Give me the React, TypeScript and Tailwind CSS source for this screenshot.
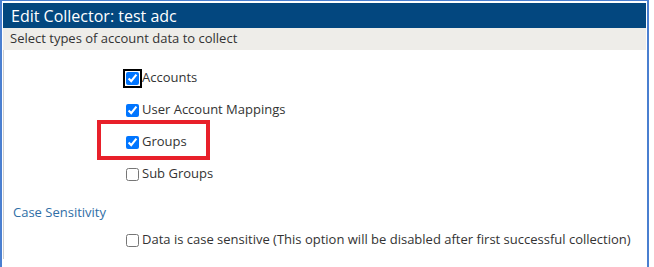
import { useState } from "react";

const rows = [
  { label: "Accounts", checked: true, focused: true },
  { label: "User Account Mappings", checked: true },
  { label: "Groups", checked: true, marked: true },
  { label: "Sub Groups", checked: false },
];

function Check({ checked, focused }: { checked: boolean; focused?: boolean }) {
  const [on, setOn] = useState(checked);
  return (
    <input
      type="checkbox"
      checked={on}
      onChange={(e) => setOn(e.target.checked)}
      className={
        "m-0 h-[13px] w-[13px] shrink-0 accent-[#0075ff] " +
        (focused ? "rounded-[3px] outline-2 outline-offset-[1px] outline-black" : "")
      }
    />
  );
}

export default function App() {
  const [caseSensitive, setCaseSensitive] = useState(false);

  return (
    <div className="h-[267px] w-[654px] bg-white font-['Open_Sans',sans-serif] text-[#333]">
      <div className="h-[267px] w-[649px] border-t border-r-2 border-l-2 border-[#4a7fd0] pt-[2px] pr-[1px] pl-[1px]">
        <div className="h-[256px] border-l border-[#cfcfcf]">
          <div className="-ml-px flex h-[25px] items-center bg-[#03477f] pl-[8px] text-[16px] leading-none text-white">
            Edit Collector: test adc
          </div>
          <div className="-ml-px flex h-[22px] items-center bg-[#eeede9] pl-[7px] text-[13px]">
            Select types of account data to collect
          </div>

          <div className="mt-[18px] flex flex-col gap-[12px] pl-[122px]">
            {rows.map((r) => (
              <div key={r.label} className="relative flex h-[20px] items-center gap-[3px] text-[13px]">
                <Check checked={r.checked} focused={r.focused} />
                <span>{r.label}</span>
                {r.marked && (
                  <div className="pointer-events-none absolute top-[-12px] left-[-29px] h-[40px] w-[113px] border-4 border-[#e8202a]" />
                )}
              </div>
            ))}
          </div>

          <div className="mt-[19px] pl-[9px] text-[13px] leading-[18px] text-[#2f6ea6]">Case Sensitivity</div>

          <label className="mt-[9px] flex h-[20px] items-center gap-[3px] pl-[122px] text-[13px]">
            <input
              type="checkbox"
              checked={caseSensitive}
              onChange={(e) => setCaseSensitive(e.target.checked)}
              className="m-0 h-[13px] w-[13px] shrink-0 accent-[#0075ff]"
            />
            <span>Data is case sensitive (This option will be disabled after first successful collection)</span>
          </label>
        </div>
      </div>
    </div>
  );
}
